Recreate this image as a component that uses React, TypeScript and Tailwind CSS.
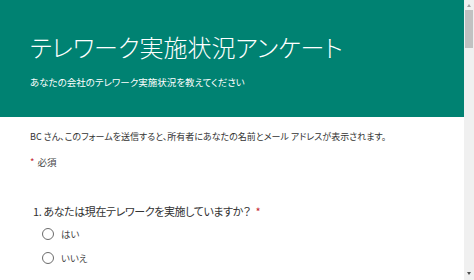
import React from "react";

function Radio({ label }: { label: string }) {
  return (
    <div className="flex h-[24px] items-center pl-[42px]">
      <span className="box-border h-[12px] w-[12px] rounded-full border border-[#6b6b6b] bg-white" />
      <span className="ml-[7px] text-[9.5px] leading-[14px] text-[#444] [font-feature-settings:'palt']">{label}</span>
    </div>
  );
}

export default function App() {
  return (
    <div
      className="flex h-[280px] w-[474px] overflow-hidden bg-white"
      style={{ fontFamily: '"Noto Sans CJK JP", "Noto Sans", sans-serif' }}
    >
      <div className="flex-1 overflow-hidden">
        <div className="h-[117px] bg-[#008272] pl-[30px] pt-[31px] text-white">
          <div className="text-[24px] font-light leading-[32px] [font-feature-settings:'palt']">
            テレワーク実施状況アンケート
          </div>
          <div className="mt-[11px] text-[9.5px] leading-[16px] [font-feature-settings:'palt']">
            あなたの会社のテレワーク実施状況を教えてください
          </div>
        </div>
        <div className="pl-[30px] pt-[13px] text-[#333]">
          <div className="text-[9px] leading-[14px] [font-feature-settings:'palt']">
            BC さん、このフォームを送信すると、所有者にあなたの名前とメール アドレスが表示されます。
          </div>
          <div className="mt-[11px] flex items-center text-[9.5px] leading-[14px]">
            <span className="text-[#c4262e]">*</span>
            <span className="ml-[3px] text-[#444]">必須</span>
          </div>
        </div>
        <div className="mt-[33px] pl-[33px] text-[11px] leading-[18px] tracking-[-0.4px] text-[#333] [font-feature-settings:'palt']">
          1. あなたは現在テレワークを実施していますか？<span className="ml-[5px] text-[#c4262e]">*</span>
        </div>
        <div className="mt-[2px]">
          <Radio label="はい" />
          <Radio label="いいえ" />
        </div>
      </div>
      <div className="flex w-[10px] flex-col items-center bg-[#f0f0f0]">
        <div className="flex h-[10px] items-center justify-center">
          <div className="h-0 w-0 border-x-[2.5px] border-b-[3px] border-x-transparent border-b-[#a3a3a3]" />
        </div>
        <div className="h-[38px] w-[8px] bg-[#c1c1c1]" />
        <div className="flex-1" />
        <div className="flex h-[14px] items-center justify-center">
          <div className="h-0 w-0 border-x-[2.5px] border-t-[3px] border-x-transparent border-t-[#505050]" />
        </div>
      </div>
    </div>
  );
}
